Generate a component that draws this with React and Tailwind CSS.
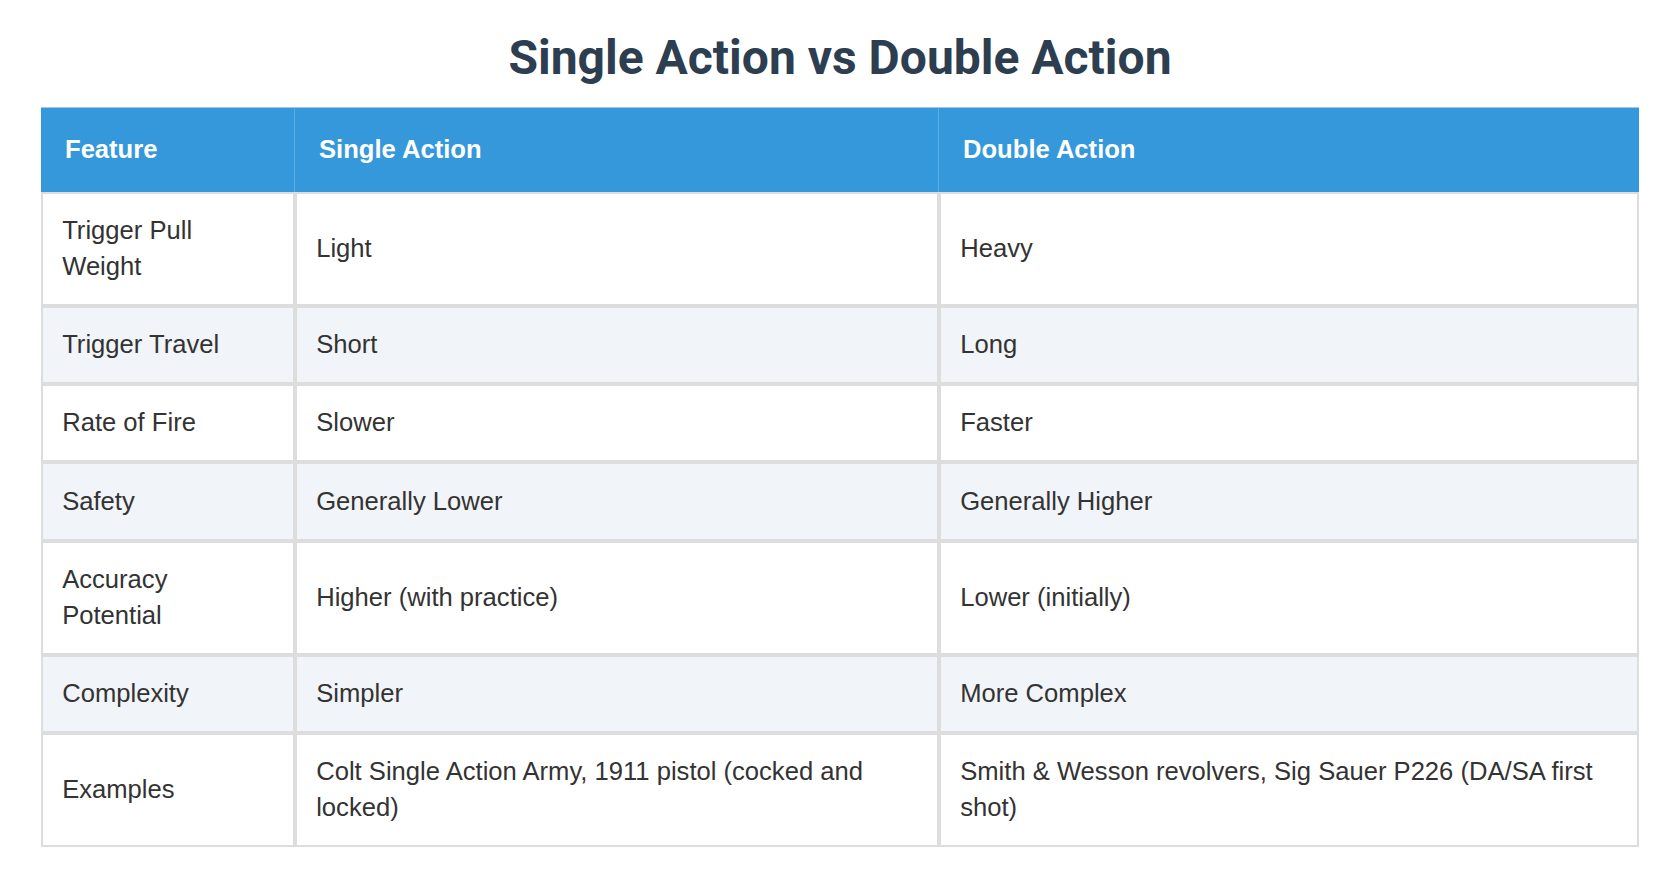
import React from "react";

const rows = [
  ["Trigger Pull Weight", "Light", "Heavy"],
  ["Trigger Travel", "Short", "Long"],
  ["Rate of Fire", "Slower", "Faster"],
  ["Safety", "Generally Lower", "Generally Higher"],
  ["Accuracy Potential", "Higher (with practice)", "Lower (initially)"],
  ["Complexity", "Simpler", "More Complex"],
  [
    "Examples",
    "Colt Single Action Army, 1911 pistol (cocked and locked)",
    "Smith & Wesson revolvers, Sig Sauer P226 (DA/SA first shot)",
  ],
];

const App = () => {
  return (
    <div className="min-h-screen bg-white px-[41px] font-['Liberation_Sans',Arial,sans-serif]">
      {/* Title */}
      <h1 className="mt-[30px] mb-[21px] text-center font-['Roboto',sans-serif] text-[48px] font-bold leading-[56px] text-[#2c3e50]">
        Single Action vs Double Action
      </h1>

      {/* Comparison table */}
      <table className="w-full table-fixed border-separate border-spacing-0 text-[25.6px] leading-[35.84px]">
        <colgroup>
          <col className="w-[254px]" />
          <col className="w-[644px]" />
          <col className="w-[700px]" />
        </colgroup>
        <thead>
          <tr>
            <th className="border-t border-r border-t-[#9ccaec] border-r-[#5aace3] bg-[#3498db] px-[24px] py-[24px] text-left font-bold text-white">
              Feature
            </th>
            <th className="border-t border-r border-t-[#9ccaec] border-r-[#5aace3] bg-[#3498db] px-[24px] py-[24px] text-left font-bold text-white">
              Single Action
            </th>
            <th className="border-t border-t-[#9ccaec] bg-[#3498db] px-[24px] py-[24px] text-left font-bold text-white">
              Double Action
            </th>
          </tr>
        </thead>
        <tbody>
          {rows.map((row, i) => (
            <tr key={row[0]} className={i % 2 === 1 ? "bg-[#f1f4f8]" : "bg-white"}>
              {row.map((cell, j) => (
                <td
                  key={j}
                  className="border-2 border-[#dddddd] px-[19.2px] py-[19.2px] align-middle text-[#333333]"
                >
                  {cell}
                </td>
              ))}
            </tr>
          ))}
        </tbody>
      </table>
    </div>
  );
};

export default App;
